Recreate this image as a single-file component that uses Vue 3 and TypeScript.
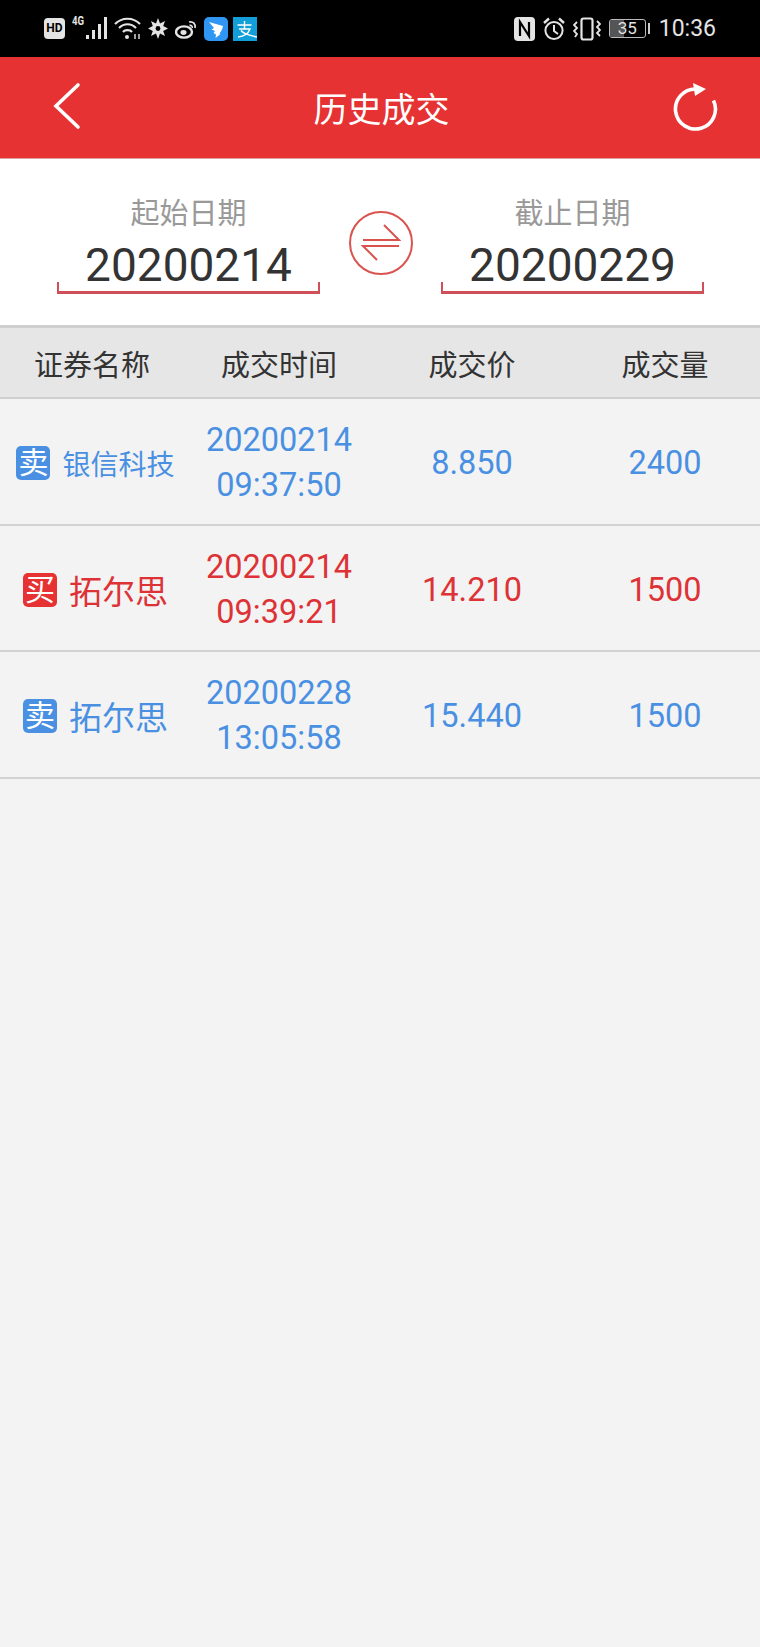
<script setup lang="ts">
interface Trade {
  side: 'buy' | 'sell'
  name: string
  date: string
  time: string
  price: string
  volume: string
  small?: boolean
}

const trades: Trade[] = [
  { side: 'sell', name: '银信科技', date: '20200214', time: '09:37:50', price: '8.850', volume: '2400', small: true },
  { side: 'buy', name: '拓尔思', date: '20200214', time: '09:39:21', price: '14.210', volume: '1500' },
  { side: 'sell', name: '拓尔思', date: '20200228', time: '13:05:58', price: '15.440', volume: '1500' }
]

const columns = ['证券名称', '成交时间', '成交价', '成交量']
</script>

<template>
  <div class="page">
    <div class="statusbar">
      <div class="status-left">
        <span class="hd">HD</span>
        <div class="signal">
          <span class="net">4G</span>
          <svg width="22" height="23" viewBox="0 0 22 23" fill="#e4e4e4">
            <rect x="0" y="18" width="3" height="4" />
            <rect x="6" y="13" width="3" height="9" />
            <rect x="12" y="7" width="3" height="15" />
            <rect x="18" y="0" width="3" height="22" />
          </svg>
        </div>
        <svg class="wifi" width="27" height="23" viewBox="0 0 27 23" fill="none" stroke="#e4e4e4" stroke-width="2.2">
          <path d="M1 7 C8 0 19 0 26 7" />
          <path d="M5 11 C10 6 17 6 22 11" />
          <path d="M9 15 C11 12.5 16 12.5 18 15" />
          <circle cx="13" cy="20" r="2" fill="#e4e4e4" stroke="none" />
          <path d="M21 17 v5 M25 17 v5" stroke-width="1.4" />
        </svg>
        <svg class="star" width="20" height="23" viewBox="0 0 20 23" fill="#e4e4e4">
          <path d="M10 1 L12 6.5 L17 4 L15.2 9 L20 11.5 L15.2 14 L17 19 L12 16.5 L10 22 L8 16.5 L3 19 L4.8 14 L0 11.5 L4.8 9 L3 4 L8 6.5 Z" />
          <circle cx="10" cy="11.5" r="2.4" fill="#000" />
        </svg>
        <svg class="weibo" width="23" height="20" viewBox="0 0 23 20" fill="none" stroke="#e4e4e4">
          <ellipse cx="9" cy="13" rx="8" ry="5.6" stroke-width="2.4" />
          <ellipse cx="8.5" cy="13.5" rx="3" ry="2.4" fill="#e4e4e4" stroke="none" />
          <path d="M14 3 C18 2 21 5 20 9" stroke-width="1.8" />
          <path d="M14.5 6.4 C16.5 6 17.6 7.5 17.2 9" stroke-width="1.6" />
        </svg>
        <svg class="ding" width="24" height="24" viewBox="0 0 24 24">
          <rect width="24" height="24" rx="5" fill="#2f96f3" />
          <path d="M5 5 L19 9 C18.5 12 17 15 15.5 16.5 L16.5 17 L11.5 21 L12 17.5 L9.5 16 L11 14 L7.5 12.5 L10 11 Z" fill="#fff" />
        </svg>
        <svg class="ali" width="24" height="24" viewBox="0 0 24 24">
          <rect width="24" height="24" fill="#129ed9" />
          <path d="M4.5 8 H18.5 M11.5 4 V12 M6 12 H17 C15.5 16 11 19.5 5 20 M8 13.5 C11 17.5 16 18 24 20" fill="none" stroke="#fff" stroke-width="1.4" />
        </svg>
      </div>
      <div class="status-right">
        <svg class="nfc" width="21" height="24" viewBox="0 0 21 24">
          <rect width="21" height="24" rx="4" fill="#e4e4e4" />
          <path d="M6 19 V5 L15 19 V5" fill="none" stroke="#000" stroke-width="2.2" />
        </svg>
        <svg class="alarm" width="22" height="24" viewBox="0 0 22 24" fill="none" stroke="#e4e4e4" stroke-width="2">
          <circle cx="11" cy="13.5" r="8.6" />
          <path d="M11 8 V14 L15 17" />
          <path d="M1 6 L6 1.5 M21 6 L16 1.5" stroke-width="2.4" />
        </svg>
        <svg class="vibrate" width="28" height="24" viewBox="0 0 28 24" fill="none" stroke="#e4e4e4" stroke-width="1.8">
          <rect x="8.5" y="1.5" width="11" height="21" rx="2" stroke-width="2.2" />
          <path d="M4 5 L1 8 L4 11 L1 14 L4 17 L2 20" />
          <path d="M24 4 L27 7 L24 10 L27 13 L24 16 L27 19" />
        </svg>
        <div class="battery">
          <div class="battery-body">
            <span class="battery-fill"></span>
            <span class="battery-num">35</span>
          </div>
          <span class="battery-nub"></span>
        </div>
        <span class="clock">10:36</span>
      </div>
    </div>

    <header class="topbar">
      <svg class="back" width="28" height="48" viewBox="0 0 28 48" fill="none" stroke="#fff" stroke-width="3.6" stroke-linecap="round">
        <path d="M25 3 L3 24 L25 45" />
      </svg>
      <h1 class="title">历史成交</h1>
      <svg class="refresh" width="46" height="50" viewBox="0 0 46 50" fill="none">
        <path d="M24 6 A20 20 0 1 0 41.500 17.400" stroke="#fff" stroke-width="3.6" />
        <path d="M21 0 L34 6 L23 13 Z" fill="#fff" />
      </svg>
    </header>

    <section class="dates">
      <div class="date-field">
        <span class="date-label">起始日期</span>
        <div class="date-value">20200214</div>
      </div>
      <svg class="swap" width="64" height="64" viewBox="0 0 64 64" fill="none" stroke="#d9534f" stroke-width="2">
        <circle cx="32" cy="32" r="31" />
        <path d="M14 29 H50 L35 14" />
        <path d="M50 35 H14 L28 49" />
      </svg>
      <div class="date-field">
        <span class="date-label">截止日期</span>
        <div class="date-value">20200229</div>
      </div>
    </section>

    <div class="table-head">
      <span v-for="col in columns" :key="col">{{ col }}</span>
    </div>

    <div v-for="(t, i) in trades" :key="i" class="row" :class="t.side">
      <div class="name-cell">
        <span class="badge">{{ t.side === 'buy' ? '买' : '卖' }}</span>
        <span class="name" :class="{ small: t.small }">{{ t.name }}</span>
      </div>
      <div class="time-cell">
        <span>{{ t.date }}</span>
        <span>{{ t.time }}</span>
      </div>
      <div class="cell">{{ t.price }}</div>
      <div class="cell">{{ t.volume }}</div>
    </div>
  </div>
</template>

<style scoped>
.page {
  width: 760px;
  height: 1647px;
  background: #f3f3f3;
  font-family: Roboto, "Noto Sans CJK SC", sans-serif;
  overflow: hidden;
}

.statusbar {
  height: 57px;
  background: #000;
  display: flex;
  align-items: center;
  justify-content: space-between;
  padding: 0 44px;
  box-sizing: border-box;
  color: #e4e4e4;
}

.status-left,
.status-right {
  display: flex;
  align-items: center;
}

.hd {
  width: 21px;
  height: 21px;
  border-radius: 4px;
  background: #e4e4e4;
  color: #000;
  font-size: 12px;
  font-weight: 700;
  line-height: 21px;
  text-align: center;
  margin-right: 7px;
}

.signal {
  position: relative;
  width: 36px;
  height: 23px;
  display: flex;
  justify-content: flex-end;
}

.net {
  position: absolute;
  left: 0;
  top: -3px;
  font-size: 12px;
  font-weight: 700;
  transform: scaleX(0.8);
  transform-origin: left;
}

.wifi {
  margin-left: 6px;
}

.star {
  margin-left: 7px;
}

.weibo {
  margin-left: 7px;
}

.ding {
  margin-left: 6px;
}

.ali {
  margin-left: 5px;
}

.alarm {
  margin-left: 8px;
}

.vibrate {
  margin-left: 8px;
}

.battery {
  display: flex;
  align-items: center;
  margin-left: 8px;
}

.battery-body {
  position: relative;
  width: 37px;
  height: 19px;
  border: 1px solid #bbb;
  border-radius: 3px;
  box-sizing: border-box;
  overflow: hidden;
}

.battery-fill {
  position: absolute;
  left: 0;
  top: 0;
  bottom: 0;
  width: 14px;
  background: #555;
}

.battery-num {
  position: absolute;
  left: 0;
  right: 0;
  top: 0;
  font-size: 17px;
  line-height: 17px;
  text-align: center;
  color: #e4e4e4;
}

.battery-nub {
  width: 2px;
  height: 11px;
  margin-left: 2px;
  background: #ccc;
}

.clock {
  margin-left: 9px;
  font-size: 23px;
  line-height: 26px;
}

.topbar {
  height: 102px;
  background: #e63232;
  border-bottom: 1px solid #dba0a0;
  box-sizing: border-box;
  display: grid;
  grid-template-columns: 1fr auto 1fr;
  align-items: center;
  padding: 0 42px 0 53px;
}

.back {
  margin-top: -4px;
}

.title {
  margin: 0 0 0 -8px;
  font-size: 34px;
  font-weight: 400;
  color: #fff;
}

.refresh {
  justify-self: end;
}

.dates {
  height: 169px;
  background: #fff;
  border-bottom: 3px solid #cfcfcf;
  box-sizing: border-box;
  display: flex;
  align-items: flex-start;
  padding: 35px 0 0 57px;
}

.date-field {
  width: 263px;
  display: flex;
  flex-direction: column;
  align-items: center;
}

.date-label {
  font-size: 29px;
  line-height: 40px;
  color: #999;
}

.date-value {
  position: relative;
  width: 100%;
  height: 60px;
  font-size: 46px;
  line-height: 62px;
  text-align: center;
  color: #333;
}

.date-value::after {
  content: "";
  position: absolute;
  left: 0;
  right: 0;
  bottom: 0;
  height: 12px;
  box-sizing: border-box;
  border: 2px solid #d0505a;
  border-top: none;
  border-bottom-width: 3px;
}

.swap {
  margin: 17px 28px 0 29px;
  flex-shrink: 0;
}

.table-head {
  height: 71px;
  background: #e6e6e6;
  border-bottom: 2px solid #cfcfcf;
  box-sizing: border-box;
  display: grid;
  grid-template-columns: 184px 190px 196px 190px;
  align-items: center;
  text-align: center;
  font-size: 29px;
  color: #333;
}

.row {
  height: 126.6px;
  border-bottom: 2px solid #d2d2d2;
  box-sizing: border-box;
  padding-top: 4px;
  display: grid;
  grid-template-columns: 184px 190px 196px 190px;
  align-items: center;
  text-align: center;
  font-size: 32.5px;
}

.row.sell {
  color: #4a90e2;
}

.row.buy {
  color: #dd3236;
}

.name-cell {
  display: flex;
  align-items: center;
  justify-content: center;
  gap: 12px;
  padding-left: 7px;
}

.badge {
  width: 34px;
  height: 34px;
  border-radius: 5px;
  color: #fff;
  font-size: 30px;
  line-height: 33px;
  text-align: center;
  flex-shrink: 0;
}

.sell .badge {
  background: #4a90e2;
}

.buy .badge {
  background: #e63232;
}

.name {
  font-size: 33px;
}

.name.small {
  font-size: 28px;
}

.time-cell {
  display: flex;
  flex-direction: column;
  line-height: 45px;
}
</style>

<style>
html,
body {
  margin: 0;
  background: #f3f3f3;
}
</style>
